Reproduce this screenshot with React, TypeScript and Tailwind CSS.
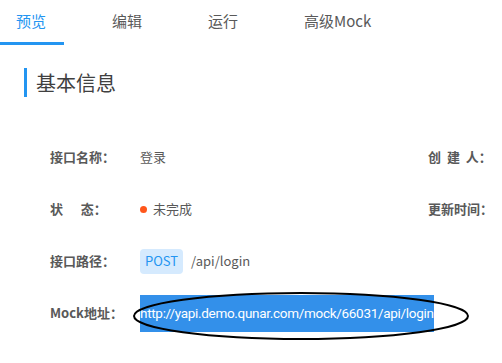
import React from 'react'

const font = { fontFamily: '"Noto Sans CJK SC", "Noto Sans", sans-serif' }

const tabs = ['预览', '编辑', '运行', '高级Mock']

function Row({ children }: { children: React.ReactNode }) {
  return <div className="flex items-center h-[52px]">{children}</div>
}

function Label({ text }: { text: string }) {
  return <div className="w-[90px] shrink-0 text-[13px] font-bold text-[#595959] whitespace-pre">{text}</div>
}

export default function App() {
  return (
    <div className="relative w-[502px] h-[363px] bg-white overflow-hidden text-[#595959]" style={font}>
      {/* Tabs */}
      <div className="flex h-[45px]">
        {tabs.map((t, i) => (
          <div key={t} className="relative w-[96px] shrink-0 flex">
            <span
              className={
                'pl-[16px] pt-[10px] text-[15px] ' + (i === 0 ? 'text-[#2395f1]' : 'text-[#595959]')
              }
            >
              {t}
            </span>
            {i === 0 && <div className="absolute left-0 bottom-0 w-[64px] h-[3px] bg-[#2395f1]" />}
          </div>
        ))}
      </div>

      {/* Section title */}
      <div className="flex items-center mt-[23px] ml-[24px] h-[29px]">
        <div className="w-[3px] h-full bg-[#2395f1]" />
        <div className="ml-[9px] text-[20px] text-[#404040] leading-none">基本信息</div>
      </div>

      <div className="pl-[50px] mt-[34px]">
        <Row>
          <Label text="接口名称：" />
          <div className="w-[288px] shrink-0 text-[13px]">登录</div>
          <div className="text-[13px] font-bold whitespace-pre">{'创  建  人：'}</div>
        </Row>
        <Row>
          <Label text={'状      态：'} />
          <div className="w-[288px] shrink-0 flex items-center text-[13px]">
            <span className="w-[7px] h-[7px] rounded-full bg-[#ff561b] mr-[6px]" />
            未完成
          </div>
          <div className="text-[13px] font-bold whitespace-nowrap">更新时间：</div>
        </Row>
        <Row>
          <Label text="接口路径：" />
          <span className="h-[25px] w-[43px] flex items-center justify-center rounded-[4px] bg-[#d5eafe] text-[#2395f1] text-[13px]">
            POST
          </span>
          <span className="ml-[8px] text-[13px]">/api/login</span>
        </Row>
        <Row>
          <Label text="Mock地址：" />
          <div
            className="h-[37px] flex items-center bg-[#3390ea] text-white text-[13.5px] tracking-[-0.3px] whitespace-nowrap"
            style={{ fontFamily: 'Roboto, "Liberation Sans", sans-serif' }}
          >
            http://yapi.demo.qunar.com/mock/66031/api/login
          </div>
        </Row>
      </div>

      {/* annotation ellipse */}
      <svg className="absolute left-0 top-0" width="502" height="363" viewBox="0 0 502 363">
        <ellipse cx="301" cy="316" rx="167" ry="23" fill="none" stroke="#000" strokeWidth="2" />
      </svg>
    </div>
  )
}
